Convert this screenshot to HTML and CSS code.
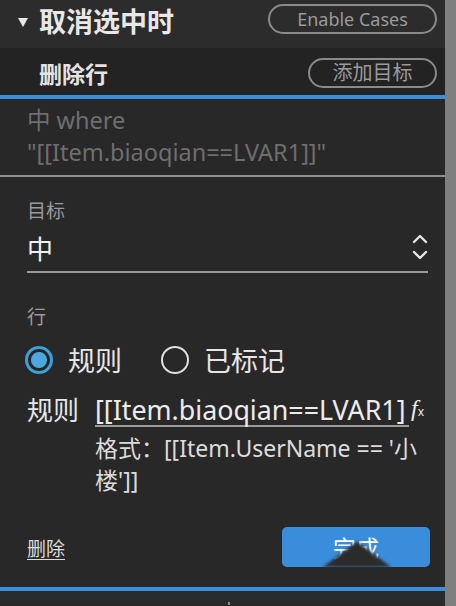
FILE: index.html
```html
<!DOCTYPE html>
<html lang="zh">
<head>
  <meta charset="UTF-8" />
  <title>取消选中时</title>
  <link rel="stylesheet" href="styles.css">
</head>
<body>
  <div class="frame">
    <div class="panel">
      <div class="head">
        <div class="head-title"><span class="caret"></span>取消选中时</div>
        <button class="pill pill-wide">Enable Cases</button>
      </div>
      <div class="sub">
        <div class="sub-title">删除行</div>
        <button class="pill pill-add">添加目标</button>
      </div>
      <div class="bar-blue"></div>

      <div class="summary">
        <p>中 where</p>
        <p>"[[Item.biaoqian==LVAR1]]"</p>
      </div>

      <div class="form">
        <div class="label">目标</div>
        <div class="select">
          <span>中</span>
          <svg class="chev" width="18" height="28" viewBox="0 0 18 28">
            <path d="M3 9 L9 3 L15 9" fill="none" stroke="#e6e6e6" stroke-width="2.4" stroke-linecap="round" stroke-linejoin="round"/>
            <path d="M3 19 L9 25 L15 19" fill="none" stroke="#e6e6e6" stroke-width="2.4" stroke-linecap="round" stroke-linejoin="round"/>
          </svg>
        </div>

        <div class="label label-row">行</div>
        <div class="radios">
          <label class="radio on"><span class="dot"></span>规则</label>
          <label class="radio"><span class="dot"></span>已标记</label>
        </div>

        <div class="rule">
          <div class="rule-name">规则</div>
          <div class="rule-body">
            <div class="rule-input">
              <span class="rule-text">[[Item.biaoqian==LVAR1]</span>
              <span class="fx"><i>f</i><small>x</small></span>
            </div>
            <div class="rule-hint">格式：[[Item.UserName == '小楼']]</div>
          </div>
        </div>

        <div class="actions">
          <a class="del">删除</a>
          <div class="done-wrap">
            <button class="done">完成</button>
            <div class="notch"><div class="notch-shape"></div></div>
          </div>
        </div>
      </div>
      <div class="bar-blue bar-bottom"></div>
      <div class="foot"><span class="tick"></span></div>
    </div>
    <div class="scroll"></div>
  </div>
</body>
</html>
```

FILE: styles.css
```css
html, body {
  margin: 0;
  padding: 0;
  background: #282828;
  font-family: "Noto Sans", "Noto Sans CJK SC", sans-serif;
}
.frame {
  display: flex;
  width: 456px;
  height: 606px;
  overflow: hidden;
}
.panel {
  width: 445px;
  flex: 0 0 445px;
  background: #282828;
}
.scroll {
  flex: 1;
  background: #7f7f7f;
}
.head {
  height: 48px;
  display: flex;
  align-items: center;
  justify-content: space-between;
  padding: 0 8px 0 18px;
  background: #2c2c2c;
  box-sizing: border-box;
}
.head-title {
  display: flex;
  align-items: center;
  color: #e8e8e8;
  font-family: "Noto Sans CJK SC", sans-serif;
  font-weight: bold;
  font-size: 27px;
  line-height: 36px;
  margin-top: -6px;
}
.caret {
  width: 0;
  height: 0;
  border-left: 5px solid transparent;
  border-right: 5px solid transparent;
  border-top: 9px solid #e8e8e8;
  margin-right: 11px;
  margin-top: 2px;
}
.pill {
  height: 30px;
  padding: 0;
  border: 2px solid #8a8a8a;
  border-radius: 15px;
  background: transparent;
  color: #9a9a9a;
  font-family: "Noto Sans", "Noto Sans CJK SC", sans-serif;
  font-size: 18px;
  line-height: 24px;
  text-align: center;
  box-sizing: border-box;
}
.pill-wide {
  width: 169px;
  margin-top: -10px;
}
.pill-add {
  width: 129px;
  font-size: 20px;
  margin-top: 2px;
}
.sub {
  height: 47px;
  display: flex;
  align-items: center;
  justify-content: space-between;
  padding: 0 8px 0 39px;
  background: #232323;
  box-sizing: border-box;
}
.sub-title {
  color: #e4e4e4;
  font-family: "Noto Sans CJK SC", sans-serif;
  font-weight: bold;
  font-size: 23px;
  margin-top: 2px;
}
.bar-blue {
  height: 4px;
  background: #3a8fdc;
}
.summary {
  padding: 5px 0 7px 27px;
  border-bottom: 2px solid #8e8e8e;
  color: #6e6e6e;
  font-size: 23.5px;
  line-height: 32px;
}
.summary p {
  margin: 0;
}
.form {
  padding: 20px 17px 0 27px;
}
.label {
  color: #9a9a9a;
  font-family: "Noto Sans CJK SC", sans-serif;
  font-size: 19px;
  line-height: 26px;
}
.label-row {
  margin-top: 30px;
}
.select {
  display: flex;
  align-items: center;
  justify-content: space-between;
  height: 50px;
  border-bottom: 2px solid #9a9a9a;
  color: #f0f0f0;
  font-family: "Noto Sans CJK SC", sans-serif;
  font-size: 26px;
  box-sizing: border-box;
}
.chev {
  margin-right: -1px;
}
.radios {
  display: flex;
  align-items: center;
  gap: 39px;
  margin-top: 14px;
  height: 34px;
}
.radio {
  display: flex;
  align-items: center;
  gap: 15px;
  color: #e6e6e6;
  font-family: "Noto Sans CJK SC", sans-serif;
  font-size: 27px;
  line-height: 34px;
}
.radio:first-child {
  margin-left: -2px;
}
.dot {
  width: 24px;
  height: 24px;
  border: 2px solid #e0e0e0;
  border-radius: 50%;
}
.radio.on .dot {
  border: 3px solid #3fa0d8;
  width: 22px;
  height: 22px;
  background: radial-gradient(circle, #4aa8de 0 7.5px, #262626 8.5px);
}
.rule {
  display: flex;
  margin-top: 17px;
}
.rule-name {
  width: 68px;
  flex: 0 0 68px;
  color: #e6e6e6;
  font-family: "Noto Sans CJK SC", sans-serif;
  font-size: 26px;
  line-height: 30px;
}
.rule-body {
  flex: 1;
}
.rule-input {
  display: flex;
  align-items: flex-start;
  height: 33px;
}
.rule-text {
  color: #ececec;
  font-size: 26.8px;
  line-height: 31px;
  border-bottom: 2px solid #9a9a9a;
  width: 314px;
  white-space: nowrap;
}
.fx {
  color: #ececec;
  font-family: "Liberation Serif", serif;
  font-size: 24px;
  line-height: 28px;
  margin-left: 2px;
}
.fx small {
  font-family: "Noto Sans", sans-serif;
  font-size: 12px;
}
.rule-hint {
  margin-top: 5px;
  width: 330px;
  color: #dcdcdc;
  font-size: 23px;
  line-height: 32px;
}
.actions {
  display: flex;
  align-items: center;
  justify-content: space-between;
  margin-top: 31px;
}
.del {
  color: #dcdcdc;
  font-family: "Noto Sans CJK SC", sans-serif;
  font-size: 19px;
  text-decoration: underline;
  text-underline-offset: 3px;
}
.done-wrap {
  position: relative;
  margin-right: -2px;
}
.done {
  display: block;
  width: 148px;
  height: 40px;
  border: 0;
  border-radius: 5px;
  background: #3a8ddb;
  color: #fff;
  font-family: "Noto Sans CJK SC", sans-serif;
  font-size: 23px;
}
.notch {
  position: absolute;
  left: 38px;
  top: 13px;
  width: 74px;
  height: 27px;
  filter: blur(1.5px);
}
.notch-shape {
  width: 100%;
  height: 100%;
  background: #2b2b2b;
  clip-path: polygon(50% 6%, 96% 100%, 4% 100%);
}
.bar-bottom {
  margin-top: 20px;
}
.foot {
  height: 14px;
  background: #2a2a2a;
  position: relative;
}
.tick {
  position: absolute;
  left: 228px;
  top: 11px;
  width: 2px;
  height: 3px;
  background: #8a8a8a;
}
```
